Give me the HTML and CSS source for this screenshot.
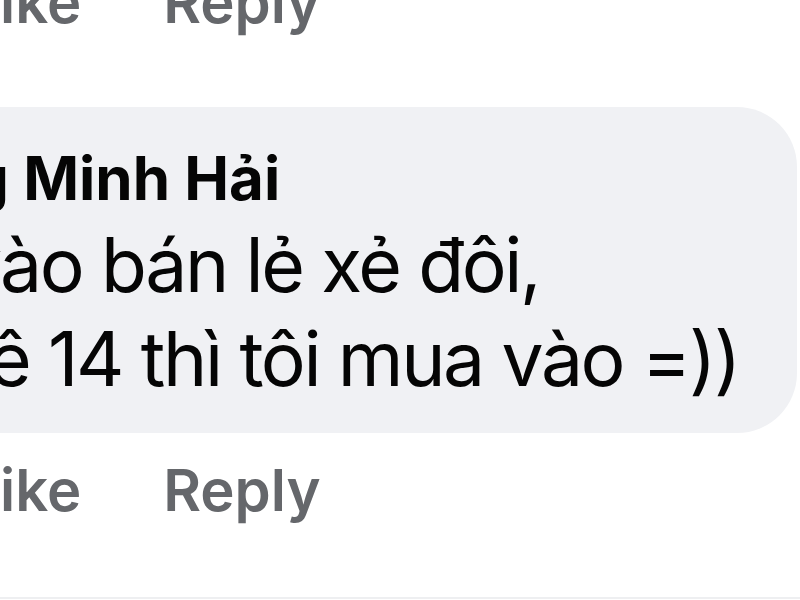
FILE: index.html
```html
<!DOCTYPE html>
<html lang="vi">
<head>
    <meta charset="UTF-8">
    <meta name="viewport" content="width=device-width, initial-scale=1.0">
    <title>Bình luận</title>
    <link rel="stylesheet" href="styles.css">
</head>
<body>
    <div class="thread">
        <div class="actions actions-top">
            <span class="action"><span class="cut">L</span>ike</span>
            <span class="action">Reply</span>
        </div>

        <div class="bubble">
            <div class="author"><span class="cut">Hoàng</span> Minh Hải</div>
            <div class="message">
                <div class="line"><span class="cut">v</span>ào bán lẻ xẻ đôi,</div>
                <div class="line line-shift"><span class="cut">v</span>ê 14 thì tôi mua vào =))</div>
            </div>
        </div>

        <div class="actions actions-bottom">
            <span class="action"><span class="cut">L</span>ike</span>
            <span class="action">Reply</span>
        </div>

        <div class="divider"></div>
    </div>
</body>
</html>
```

FILE: styles.css
```css
body {
    margin: 0;
    width: 800px;
    height: 600px;
    overflow: hidden;
    background-color: #ffffff;
    font-family: Inter, "Noto Sans", sans-serif;
    color: #050505;
}

.thread {
    width: 800px;
}

/* leading letters that are scrolled off the left edge */
.cut {
    display: inline-block;
    width: 0;
    direction: rtl;
    white-space: nowrap;
}

.actions {
    display: flex;
    gap: 82px;
    height: 70px;
    line-height: 70px;
    font-size: 58px;
    font-weight: 600;
    color: #65676b;
}

.action {
    white-space: nowrap;
}

.actions-top {
    margin-top: -33px;
}

.actions-bottom {
    margin-top: 22px;
}

.bubble {
    margin-top: 70px;
    margin-left: -60px;
    width: 857px;
    padding: 35px 0 27px 60px;
    box-sizing: border-box;
    background-color: #f0f1f4;
    border-radius: 0 60px 60px 0;
}

.author {
    font-size: 60px;
    font-weight: 700;
    line-height: 72px;
    height: 72px;
    margin-bottom: 4px;
    padding-left: 9px;
    white-space: nowrap;
}

.message {
    font-size: 75px;
    line-height: 94px;
    letter-spacing: -2.4px;
    font-weight: 400;
}

.line {
    white-space: nowrap;
}

.line-shift {
    margin-left: -12px;
}

.divider {
    margin-top: 72px;
    border-top: 2px solid #eeeff1;
}
```
